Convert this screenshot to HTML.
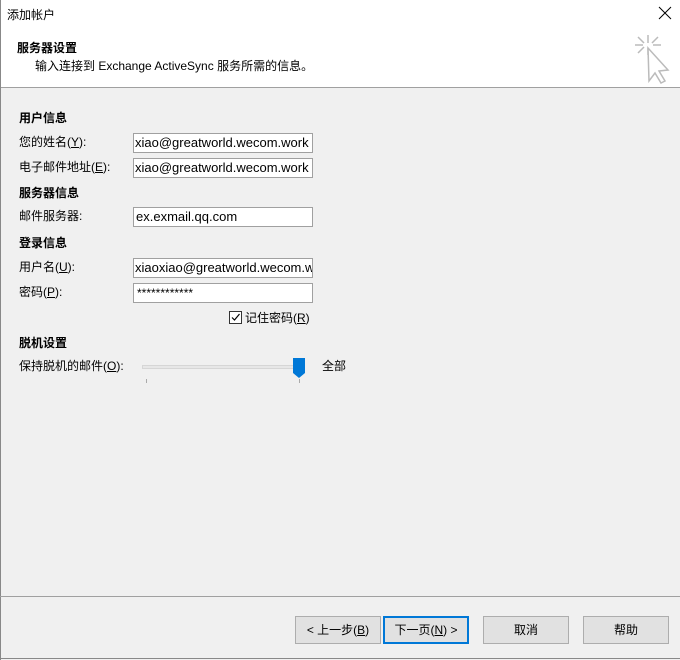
<!DOCTYPE html>
<html><head><meta charset="utf-8"><style>
*{margin:0;padding:0;box-sizing:border-box}
body{width:680px;height:660px;background:#f0f0f0;font-family:"Liberation Sans","Microsoft YaHei","Noto Sans CJK SC",sans-serif;font-size:12px;color:#000;position:relative;overflow:hidden}
.a{position:absolute;white-space:nowrap;line-height:16px}
.in{position:absolute;left:133px;width:180px;height:20px;background:#fff;border:1px solid #a0a0a0;padding-left:1px;line-height:18px;font-size:13px;overflow:hidden;white-space:nowrap}
.b{font-weight:bold}
.btn{position:absolute;top:616px;height:28px;width:86px;background:#e1e1e1;border:1px solid #adadad;text-align:center;line-height:26px}
u{text-decoration:underline}
</style></head><body>
<div style="position:absolute;left:0;top:0;width:680px;height:88px;background:#fff;border-bottom:1px solid #a0a0a0"></div>
<div style="position:absolute;left:0;top:0;width:1px;height:660px;background:#888"></div>
<div style="position:absolute;left:0;top:658px;width:680px;height:1px;background:#888"></div>
<div class="a" style="left:7px;top:7px">添加帐户</div>
<svg class="a" style="left:658px;top:6px" width="14" height="14"><path d="M1 1L13 13M13 1L1 13" stroke="#000" stroke-width="1"/></svg>
<div class="a b" style="left:17px;top:40px">服务器设置</div>
<div class="a" style="left:35px;top:58px">输入连接到 Exchange ActiveSync 服务所需的信息。</div>
<svg class="a" style="left:630px;top:33px" width="42" height="52"><g stroke="#bbb" stroke-width="1.5" fill="none"><path d="M18 2v8M18 15v7M5 12h8M23 12h8M8 4l6 6M28 4l-6 6M8 20l6-6"/><path d="M18 15l1 33 6-8 6 10 4-2-6-10 9-1z" fill="#fff"/></g></svg>
<div class="a b" style="left:19px;top:110px">用户信息</div>
<div class="a" style="left:19px;top:134px">您的姓名(<u>Y</u>):</div>
<div class="in" style="top:133px">xiao@greatworld.wecom.work</div>
<div class="a" style="left:19px;top:159px">电子邮件地址(<u>E</u>):</div>
<div class="in" style="top:158px">xiao@greatworld.wecom.work</div>
<div class="a b" style="left:19px;top:185px">服务器信息</div>
<div class="a" style="left:19px;top:208px">邮件服务器:</div>
<div class="in" style="top:207px;padding-left:2px">ex.exmail.qq.com</div>
<div class="a b" style="left:19px;top:235px">登录信息</div>
<div class="a" style="left:19px;top:259px">用户名(<u>U</u>):</div>
<div class="in" style="top:258px">xiaoxiao@greatworld.wecom.work</div>
<div class="a" style="left:19px;top:284px">密码(<u>P</u>):</div>
<div class="in" style="top:283px;padding-left:3px;font-size:12px">************</div>
<div style="position:absolute;left:229px;top:311px;width:13px;height:13px;background:#fff;border:1px solid #333"></div>
<svg class="a" style="left:230px;top:312px" width="11" height="11"><path d="M2 5.5l2.5 2.5 5-6" stroke="#000" stroke-width="1.2" fill="none"/></svg>
<div class="a" style="left:245px;top:310px">记住密码(<u>R</u>)</div>
<div class="a b" style="left:19px;top:335px">脱机设置</div>
<div class="a" style="left:19px;top:358px">保持脱机的邮件(<u>O</u>):</div>
<div style="position:absolute;left:142px;top:365px;width:159px;height:4px;background:#e7e7e7;border:1px solid #d6d6d6"></div>
<svg class="a" style="left:293px;top:358px" width="12" height="20"><path d="M0 0h12v15l-6 5-6-5z" fill="#0078d7"/></svg>
<div style="position:absolute;left:146px;top:379px;width:1px;height:4px;background:#aaa"></div>
<div style="position:absolute;left:299px;top:379px;width:1px;height:4px;background:#aaa"></div>
<div class="a" style="left:322px;top:358px">全部</div>
<div style="position:absolute;left:0;top:596px;width:680px;height:1px;background:#a0a0a0"></div>
<div class="btn" style="left:295px">&lt; 上一步(<u>B</u>)</div>
<div class="btn" style="left:383px;border:2px solid #0078d7;line-height:24px">下一页(<u>N</u>) &gt;</div>
<div class="btn" style="left:483px">取消</div>
<div class="btn" style="left:583px">帮助</div>
</body></html>
